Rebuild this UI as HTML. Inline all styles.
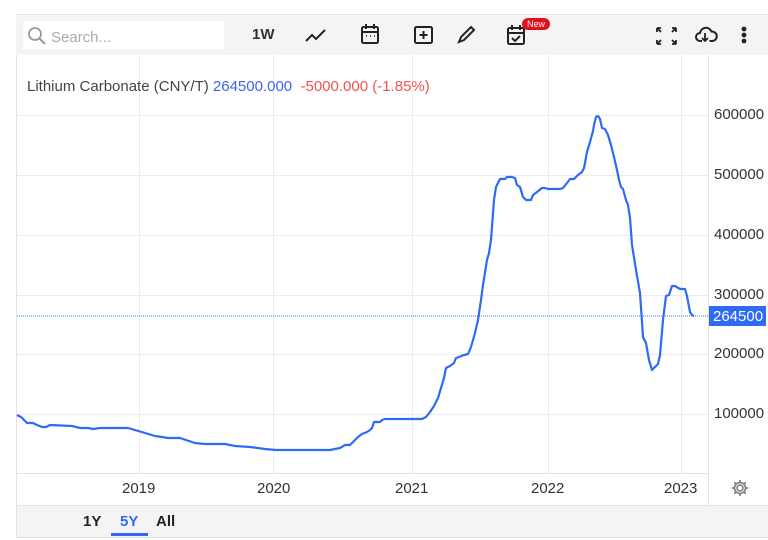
<!DOCTYPE html>
<html><head><meta charset="utf-8"><style>
*{margin:0;padding:0;box-sizing:border-box}
body{width:768px;height:540px;background:#fff;font-family:"Liberation Sans",sans-serif;position:relative;overflow:hidden}
.abs{position:absolute}
.tb{left:16px;top:14px;width:752px;height:41px;background:#f4f4f4;border-top:1px solid #e6e6e6}
.search{left:23px;top:21px;width:201px;height:28px;background:#fff}
.ax{font-size:15px;color:#333}
</style></head><body>
<div class="abs" style="left:16px;top:14px;width:752px;height:524px;border-left:1px solid #e3e3e3;border-bottom:1px solid #e3e3e3"></div>
<div class="abs tb"></div>
<div class="abs search"></div>
<svg class="abs" style="left:27px;top:26px" width="20" height="20" viewBox="0 0 20 20"><circle cx="8" cy="8" r="6" fill="none" stroke="#999" stroke-width="1.8"/><path d="M12.5 12.5L18 18" stroke="#999" stroke-width="2"/></svg>
<div class="abs" style="left:51px;top:29px;font-size:15px;color:#aaa">Search...</div>
<div class="abs" style="left:252px;top:26px;font-size:15px;font-weight:bold;color:#333">1W</div>
<svg class="abs" width="768" height="60" style="left:0;top:0" fill="none" stroke="#222" stroke-width="2">
<path d="M306 41l6-6 4 4 9-9"/>
<rect x="362" y="27" width="16" height="16" rx="1.5"/><path d="M362 32h16M366 24v5M374 24v5"/><path d="M366 36h1M370 36h1M374 36h1" stroke-width="1.6"/>
<rect x="415" y="27" width="17" height="16" rx="1.5"/><path d="M423.5 31v8M419.5 35h8"/>
<path d="M459 42l2-5 10-10 3 3-10 10z"/>
<rect x="508" y="28" width="16" height="16" rx="1.5"/><path d="M508 33h16M512 25v5M520 25v5M512 38l3 3 5-5"/>
<path d="M657 28h4M657 28v4M657 28l4 4M676 28h-4M676 28v4M676 28l-4 4M657 44h4M657 44v-4M657 44l4-4M676 44h-4M676 44v-4M676 44l-4-4" stroke-width="1.8"/>
<path d="M702 41h-2a4 4 0 0 1 0-8 6 6 0 0 1 11.5-1.5 4.5 4.5 0 0 1 1 9.5h-3"/><path d="M705 33v7M702 38l3 3 3-3" stroke-width="1.8"/>
<circle cx="744" cy="29" r="1.4" fill="#222"/><circle cx="744" cy="35" r="1.4" fill="#222"/><circle cx="744" cy="41" r="1.4" fill="#222"/>
</svg>
<div class="abs" style="left:522px;top:18px;width:28px;height:12px;background:#e3101a;border-radius:6px;color:#fff;font-size:9px;text-align:center;line-height:12px">New</div>
<svg class="abs" style="left:0;top:0" width="768" height="540">
<g stroke="#ececec" stroke-width="1">
<path d="M139.5 55v418M273.5 55v418M412.5 55v418M548.5 55v418M681.5 55v418"/>
<path d="M17 115.5h691M17 175.5h691M17 235.5h691M17 295.5h691M17 354.5h691M17 414.5h691"/>
</g>
<path d="M17 473.5h691M708.5 55v450" stroke="#e3e3e3"/>
<path d="M17 505.5h751" stroke="#e3e3e3"/>
<rect x="17" y="506" width="751" height="31" fill="#f4f4f4"/>
<path d="M17 316h692" stroke="#3a6ff5" stroke-width="1" stroke-dasharray="1,1"/>
<polyline fill="none" stroke="#2f6af5" stroke-width="2.2" stroke-linejoin="round" points="17,415 21,417 27,423 33,423 37,425 42,427 46,427 50,425 72,426 80,428 88,428 93,429 100,428 128,428 135,430 145,433 155,436 162,437 168,438 180,438 186,440 195,443 205,444 225,444 235,446 250,447 265,449 276,450 330,450 335,449 340,448 345,445 350,445 355,440 358,437 362,434 367,432 370,430 372,428 374,422 380,422 382,420 385,419 422,419 426,417 430,412 434,406 438,398 441,388 444,378 446,368 450,366 454,363 456,358 459,357 464,355 468,354 471,347 475,333 478,320 481,300 483,285 487,260 489,253 491,240 494,200 496,187 500,179 505,179 507,177 512,177 515,178 517,185 520,187 523,197 526,200 531,200 533,195 537,192 542,188 545,188 548,189 560,189 563,188 567,183 570,179 574,179 578,175 582,172 584,168 587,152 590,142 593,131 594,125 596,117 598,116 600,119 602,128 605,129 608,135 611,145 614,157 617,170 619,180 621,187 623,189 626,200 628,205 630,218 632,245 636,270 640,293 643,337 646,343 649,360 652,370 655,367 658,364 660,355 663,320 666,296 669,295 672,286 675,286 680,289 685,289 687,296 690,312 692,315 694,316"/>
<rect x="709" y="306" width="57" height="20" fill="#2f6af5"/>
<rect x="111" y="533" width="37" height="3" fill="#2f6af5"/>
<g transform="translate(740,488)" fill="none" stroke="#777" stroke-width="1.5"><circle r="3"/><path d="M0-8v3M0 8v-3M-8 0h3M8 0h-3M-5.7-5.7l2 2M5.7 5.7l-2-2M-5.7 5.7l2-2M5.7-5.7l-2 2"/><circle r="5.5"/></g>
</svg>
<div class="abs" style="left:27px;top:78px;font-size:15px;color:#444">Lithium Carbonate (CNY/T) <span style="color:#3b63f5">264500.000</span>&nbsp; <span style="color:#ef5350">-5000.000 (-1.85%)</span></div>
<div class="abs ax" style="left:714px;top:106px">600000</div>
<div class="abs ax" style="left:714px;top:166px">500000</div>
<div class="abs ax" style="left:714px;top:226px">400000</div>
<div class="abs ax" style="left:714px;top:286px">300000</div>
<div class="abs ax" style="left:714px;top:345px">200000</div>
<div class="abs ax" style="left:714px;top:405px">100000</div>
<div class="abs" style="left:713px;top:308px;font-size:15px;color:#fff">264500</div>
<div class="abs ax" style="left:122px;top:480px">2019</div>
<div class="abs ax" style="left:257px;top:480px">2020</div>
<div class="abs ax" style="left:395px;top:480px">2021</div>
<div class="abs ax" style="left:531px;top:480px">2022</div>
<div class="abs ax" style="left:664px;top:480px">2023</div>
<div class="abs" style="left:83px;top:513px;font-size:15px;font-weight:bold;color:#222">1Y</div>
<div class="abs" style="left:120px;top:513px;font-size:15px;font-weight:bold;color:#2f6af5">5Y</div>
<div class="abs" style="left:156px;top:513px;font-size:15px;font-weight:bold;color:#222">All</div>
</body></html>
